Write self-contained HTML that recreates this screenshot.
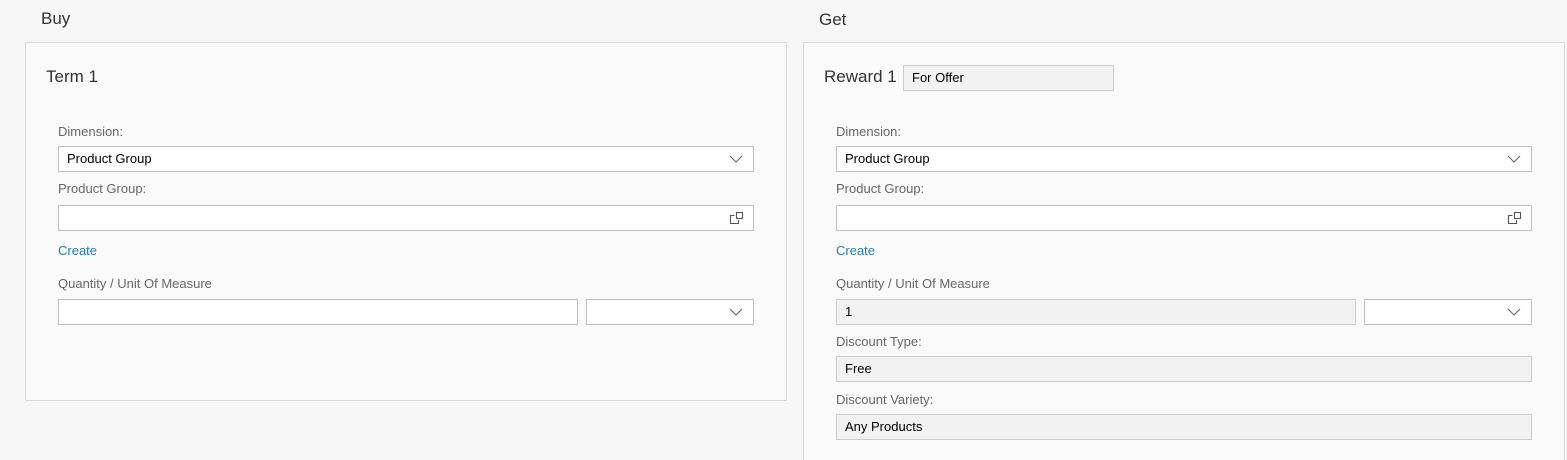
<!DOCTYPE html>
<html><head><meta charset="utf-8"><style>
html,body{margin:0;width:1567px;height:460px;overflow:hidden}
body{background:#f7f7f7;font-family:"Liberation Sans",sans-serif;position:relative}
.a{position:absolute}
.h{font-size:17px;color:#333}
.panel{position:absolute;background:#fafafa;border:1px solid #d9d9d9;box-sizing:border-box}
.lbl{position:absolute;font-size:13px;color:#666}
.in{position:absolute;height:26px;box-sizing:border-box;border:1px solid #bfbfbf;background:#fff;font-size:13px;color:#000;line-height:24px;padding-left:8px}
.ro{background:#f2f2f2;border-color:#ccc}
.lnk{position:absolute;font-size:13px;color:#2a7ab0}
svg{position:absolute}
</style></head><body>
<div class="a h" style="left:41px;top:9px">Buy</div>
<div class="a h" style="left:819px;top:10px">Get</div>
<div class="panel" style="left:25px;top:42px;width:762px;height:359px"></div>
<div class="panel" style="left:803px;top:42px;width:762px;height:430px"></div>

<div class="a h" style="left:46px;top:67px">Term 1</div>
<div class="lbl" style="left:58px;top:124px">Dimension:</div>
<div class="in" style="left:58px;top:146px;width:696px">Product Group<svg style="right:10px;top:8px" width="14" height="8" viewBox="0 0 14 8"><path d="M1 1l6 6 6-6" fill="none" stroke="#666" stroke-width="1.1"/></svg></div>
<div class="lbl" style="left:58px;top:181px">Product Group:</div>
<div class="in" style="left:58px;top:205px;width:696px"><svg style="right:9px;top:5px" width="15" height="14" viewBox="0 0 15 14"><path d="M5.5 4.5H1.5v8h8V9" fill="none" stroke="#555" stroke-width="1.1"/><rect x="7.5" y="1.5" width="6" height="6" fill="none" stroke="#555" stroke-width="1.1"/></svg></div>
<div class="lnk" style="left:58px;top:243px">Create</div>
<div class="lbl" style="left:58px;top:276px">Quantity / Unit Of Measure</div>
<div class="in" style="left:58px;top:299px;width:520px"></div>
<div class="in" style="left:586px;top:299px;width:168px"><svg style="right:10px;top:8px" width="14" height="8" viewBox="0 0 14 8"><path d="M1 1l6 6 6-6" fill="none" stroke="#666" stroke-width="1.1"/></svg></div>

<div class="a h" style="left:824px;top:67px">Reward 1</div>
<div class="in ro" style="left:903px;top:65px;width:211px">For Offer</div>
<div class="lbl" style="left:836px;top:124px">Dimension:</div>
<div class="in" style="left:836px;top:146px;width:696px">Product Group<svg style="right:10px;top:8px" width="14" height="8" viewBox="0 0 14 8"><path d="M1 1l6 6 6-6" fill="none" stroke="#666" stroke-width="1.1"/></svg></div>
<div class="lbl" style="left:836px;top:181px">Product Group:</div>
<div class="in" style="left:836px;top:205px;width:696px"><svg style="right:9px;top:5px" width="15" height="14" viewBox="0 0 15 14"><path d="M5.5 4.5H1.5v8h8V9" fill="none" stroke="#555" stroke-width="1.1"/><rect x="7.5" y="1.5" width="6" height="6" fill="none" stroke="#555" stroke-width="1.1"/></svg></div>
<div class="lnk" style="left:836px;top:243px">Create</div>
<div class="lbl" style="left:836px;top:276px">Quantity / Unit Of Measure</div>
<div class="in ro" style="left:836px;top:299px;width:520px">1</div>
<div class="in" style="left:1364px;top:299px;width:168px"><svg style="right:10px;top:8px" width="14" height="8" viewBox="0 0 14 8"><path d="M1 1l6 6 6-6" fill="none" stroke="#666" stroke-width="1.1"/></svg></div>
<div class="lbl" style="left:836px;top:334px">Discount Type:</div>
<div class="in ro" style="left:836px;top:356px;width:696px">Free</div>
<div class="lbl" style="left:836px;top:392px">Discount Variety:</div>
<div class="in ro" style="left:836px;top:414px;width:696px">Any Products</div>
</body></html>
